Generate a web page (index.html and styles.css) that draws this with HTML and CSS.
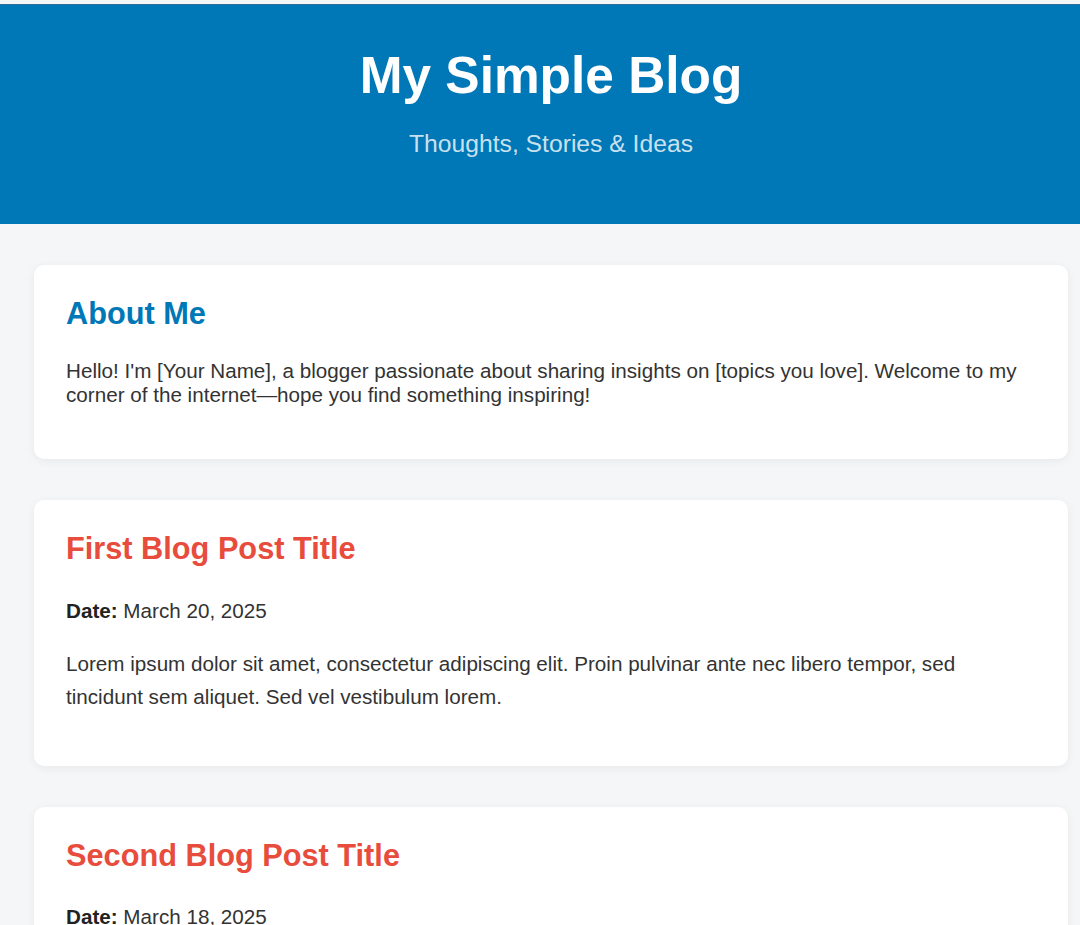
FILE: index.html
```html
<!DOCTYPE html>
<html lang="en">
<head>
<meta charset="utf-8">
<title>My Simple Blog</title>
<link rel="stylesheet" href="styles.css">
</head>
<body>
<div class="page">
  <header class="site-header">
    <h1 class="site-title">My Simple Blog</h1>
    <p class="site-tagline">Thoughts, Stories &amp; Ideas</p>
  </header>
  <main class="content">
    <section class="card about">
      <h2 class="card-title about-title">About Me</h2>
      <p class="about-text">Hello! I'm [Your Name], a blogger passionate about sharing insights on [topics you love]. Welcome to my corner of the internet—hope you find something inspiring!</p>
    </section>
    <article class="card post">
      <h2 class="card-title post-title">First Blog Post Title</h2>
      <p class="post-text"><strong>Date:</strong> March 20, 2025</p>
      <p class="post-text">Lorem ipsum dolor sit amet, consectetur adipiscing elit. Proin pulvinar ante nec libero tempor, sed tincidunt sem aliquet. Sed vel vestibulum lorem.</p>
    </article>
    <article class="card post">
      <h2 class="card-title post-title">Second Blog Post Title</h2>
      <p class="post-text"><strong>Date:</strong> March 18, 2025</p>
      <p class="post-text">Curabitur non nulla sit amet nisl tempus convallis quis ac lectus. Vivamus magna justo, lacinia eget consectetur sed, convallis at tellus.</p>
    </article>
  </main>
</div>
</body>
</html>
```
FILE: styles.css
```css
html, body {
  overflow-x: hidden;
}
body {
  margin: 0;
  background: #f4f6f8;
  font-family: "Liberation Sans", Arial, sans-serif;
  font-size: 20.65px;
  color: #333333;
}
.page {
  width: 1102px;
  padding-top: 4px;
}
.site-header {
  background: #0077b6;
  border-top: 1px solid #2b6e98;
  color: #ffffff;
  text-align: center;
  padding: 40px 20px 42px;
}
.site-title {
  margin: 0;
  font-size: 51.4px;
  font-weight: bold;
  line-height: normal;
}
.site-tagline {
  margin: 24.6px 0;
  font-size: 24.7px;
  color: rgba(255, 255, 255, 0.8);
}
.content {
  padding: 41px 34px 0;
  display: flex;
  flex-direction: column;
  gap: 41px;
}
.card {
  background: #ffffff;
  border-radius: 10px;
  padding: 31px 35px 32px 32px;
  box-shadow: 0 2px 10px rgba(0, 0, 0, 0.06);
}
.card-title {
  margin: 0 0 26.5px;
  font-size: 30.72px;
  font-weight: bold;
  line-height: normal;
}
.about-title {
  color: #0077b6;
}
.post-title {
  color: #e74c3c;
}
.about-text {
  margin: 0 0 20.5px;
  line-height: normal;
}
.post-text {
  margin: 0 0 20.5px;
  line-height: 1.6;
}
.post-text strong {
  color: #222222;
}
```
